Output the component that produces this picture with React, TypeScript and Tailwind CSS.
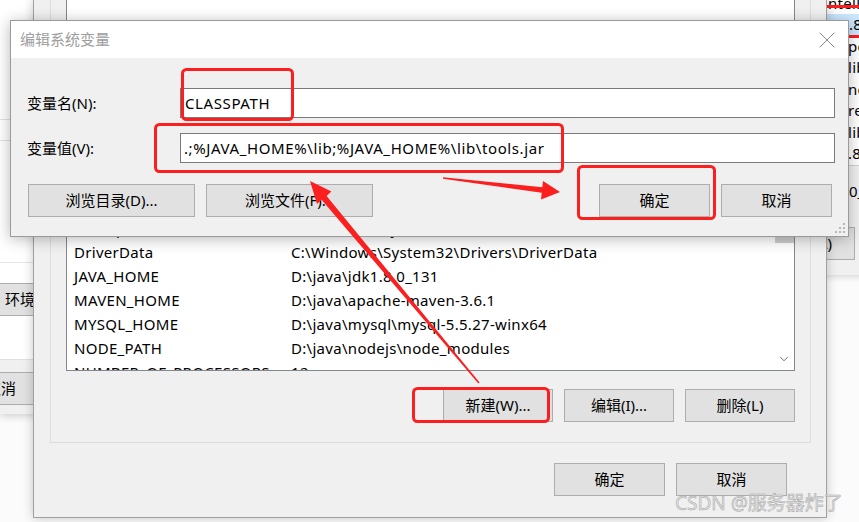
import { X, ChevronDown } from 'lucide-react';

const SYS_VARS: [string, string][] = [
  ['ComSpec', 'C:\\Windows\\system32\\cmd.exe'],
  ['DriverData', 'C:\\Windows\\System32\\Drivers\\DriverData'],
  ['JAVA_HOME', 'D:\\java\\jdk1.8.0_131'],
  ['MAVEN_HOME', 'D:\\java\\apache-maven-3.6.1'],
  ['MYSQL_HOME', 'D:\\java\\mysql\\mysql-5.5.27-winx64'],
  ['NODE_PATH', 'D:\\java\\nodejs\\node_modules'],
  ['NUMBER_OF_PROCESSORS', '12'],
];

// only the tail of each path shows past the dialogs in front
const PATH_ITEMS = ['poin', 'lib', 'nc', 're', 'lib', '.8.'];

function WinButton({ children, className = '' }: { children: React.ReactNode; className?: string }) {
  return (
    <div
      className={`flex h-[33px] items-center justify-center whitespace-nowrap border border-[#adadad] bg-[#e1e1e1] text-[15px] text-black ${className}`}
    >
      {children}
    </div>
  );
}

function Annotations() {
  return (
    <svg className="pointer-events-none absolute left-0 top-0" width="859" height="522" viewBox="0 0 859 522">
      <g fill="none" stroke="#fb1f1f" strokeWidth="3">
        <rect x="182.5" y="69.5" width="110" height="50" rx="4" />
        <rect x="155.5" y="124.5" width="407" height="47" rx="4" />
        <rect x="578.5" y="166.5" width="136" height="52" rx="4" />
        <rect x="413.5" y="388.5" width="135" height="33" rx="4" />
      </g>
      <g fill="#fb1f1f">
        <polygon points="443,177.3 542.3,187.3 543,181 560,192 541,199.5 541.7,192.7 443,178.8" />
        <polygon points="479.6,382.6 326.6,196 331.4,191.6 310,181 317,204 321.6,199.8 478.4,383.4" />
      </g>
    </svg>
  );
}

export default function App() {
  return (
    <div className="relative h-[522px] w-[859px] overflow-hidden bg-[#fbfbfb] font-['Noto_Sans','Noto_Sans_CJK_SC',sans-serif] text-[15px] text-black">
      {/* system properties window, far left */}
      <div className="absolute left-0 top-0 flex h-[414px] w-[80px] flex-col bg-white shadow-[0_2px_8px_rgba(0,0,0,0.18)]">
        <div className="mt-[119px] h-px bg-[#e3e3e3]" />
        <div className="mt-[20px] h-px bg-[#e3e3e3]" />
        <div className="mt-[121px] h-px bg-[#e6e6e6]" />
        <WinButton className="-ml-[20px] mt-[20px] w-[120px] justify-start pl-[24px]">环境变量(N)...</WinButton>
        <div className="mt-[43px] flex flex-1 flex-col border-t border-[#dfdfdf] bg-[#f0f0f0]">
          <WinButton className="-ml-[60px] mt-[12px] w-[110px] justify-start pl-[45px]">取消</WinButton>
        </div>
      </div>

      {/* path editor window, far right (mostly hidden) */}
      <div className="absolute left-[700px] top-0 flex h-[275px] w-[180px] flex-col bg-[#f0f0f0] shadow-[0_2px_6px_rgba(0,0,0,0.15)]">
        <div className="relative flex h-[166px] flex-col overflow-hidden border-b border-[#d0d0d0] bg-white">
          <div className="-mt-[8px] tracking-[0.3px]">
            <div className="flex h-[21.5px] items-center whitespace-nowrap pl-[128px]">ntellij</div>
            <div className="flex h-[21.5px] items-center whitespace-nowrap bg-[#cce8ff] pl-[149px]">.8</div>
            {PATH_ITEMS.map((p, i) => (
              <div key={i} className="flex h-[21.5px] items-center whitespace-nowrap pl-[148px]">
                {p}
              </div>
            ))}
          </div>
          <div className="absolute left-0 right-0 top-[5px] h-[3px] bg-[#fb1f1f]" />
          <div className="absolute left-0 right-0 top-[35px] h-[3px] bg-[#fb1f1f]" />
        </div>
        <div className="mt-[14px] whitespace-nowrap pl-[149px]">0_131</div>
        <WinButton className="ml-[50px] mt-[24px] h-[27px] w-[105px] justify-end pr-[22px]">应用(A)</WinButton>
      </div>

      {/* environment variables window */}
      <div className="absolute left-[33px] top-0 flex h-[518px] w-[794px] flex-col border border-t-0 border-[#a0a0a0] bg-[#f0f0f0] shadow-[0_0_10px_rgba(0,0,0,0.22)]">
        <div className="ml-[16px] mr-[15px] flex h-[443px] flex-col border border-t-0 border-[#dcdcdc] px-[15px]">
          <div className="relative h-[371px] overflow-hidden border border-t-0 border-[#828790] bg-white">
            <div className="pl-[7px] pt-[216px] tracking-[0.3px]">
              {SYS_VARS.map(([k, v]) => (
                <div key={k} className="flex h-[24px] items-center whitespace-nowrap">
                  <span className="w-[217px] shrink-0">{k}</span>
                  <span>{v}</span>
                </div>
              ))}
            </div>
            <div className="absolute bottom-0 right-0 top-0 flex w-[20px] flex-col items-center bg-white">
              <div className="mt-[30px] h-[213px] w-[19px] bg-[#cdcdcd]" />
              <ChevronDown className="mb-[4px] mt-auto text-[#606060]" size={14} strokeWidth={1.6} />
            </div>
          </div>
          <div className="mt-[18px] flex justify-end gap-[11px]">
            <WinButton className="w-[110px]">新建(W)...</WinButton>
            <WinButton className="w-[110px]">编辑(I)...</WinButton>
            <WinButton className="w-[110px]">删除(L)</WinButton>
          </div>
        </div>
        <div className="mt-[20px] flex justify-end gap-[11px] pr-[39px]">
          <WinButton className="w-[111px]">确定</WinButton>
          <WinButton className="w-[111px]">取消</WinButton>
        </div>
      </div>

      {/* edit system variable dialog */}
      <div className="absolute left-[10px] top-[20px] flex h-[217px] w-[839px] flex-col border border-[#9a9a9a] bg-[#f0f0f0] shadow-[0_2px_14px_rgba(0,0,0,0.28)]">
        <div className="flex h-[37px] items-center justify-between bg-white pl-[9px] pr-[7px]">
          <span className="text-[#9d9d9d]">编辑系统变量</span>
          <X className="text-[#808080]" size={28} strokeWidth={0.8} />
        </div>
        <div className="flex flex-1 flex-col pl-[16px]">
          <div className="mt-[30px] flex items-center pr-[13px]">
            <span className="w-[153px]">变量名(N):</span>
            <div className="flex h-[30px] flex-1 items-center border border-[#7a7a7a] bg-white pl-[4px] tracking-[0.6px]">
              CLASSPATH
            </div>
          </div>
          <div className="mt-[15px] flex items-center pr-[13px]">
            <span className="w-[153px]">变量值(V):</span>
            <div className="flex h-[30px] flex-1 items-center border border-[#7a7a7a] bg-white pl-[3px] tracking-[0.6px]">
              .;%JAVA_HOME%\lib;%JAVA_HOME%\lib\tools.jar
            </div>
          </div>
          <div className="ml-[1px] mt-[21px] flex gap-[11px] pr-[16px]">
            <WinButton className="w-[167px]">浏览目录(D)...</WinButton>
            <WinButton className="w-[167px]">浏览文件(F)...</WinButton>
            <WinButton className="ml-auto w-[111px]">确定</WinButton>
            <WinButton className="w-[111px]">取消</WinButton>
          </div>
          <div className="relative flex-1">
            <svg className="absolute bottom-[3px] right-[3px]" width="10" height="10" viewBox="0 0 10 10" fill="#b8b8b8">
              <rect x="8" y="0" width="2" height="2" />
              <rect x="4" y="4" width="2" height="2" />
              <rect x="8" y="4" width="2" height="2" />
              <rect x="0" y="8" width="2" height="2" />
              <rect x="4" y="8" width="2" height="2" />
              <rect x="8" y="8" width="2" height="2" />
            </svg>
          </div>
        </div>
      </div>

      <Annotations />

      <div className="absolute left-[675px] top-[490px] whitespace-nowrap text-[19px] leading-[26px] text-[#e4e4e4] [-webkit-text-stroke:0.5px_#a4a4a4]">
        CSDN @服务器炸了
      </div>
    </div>
  );
}
